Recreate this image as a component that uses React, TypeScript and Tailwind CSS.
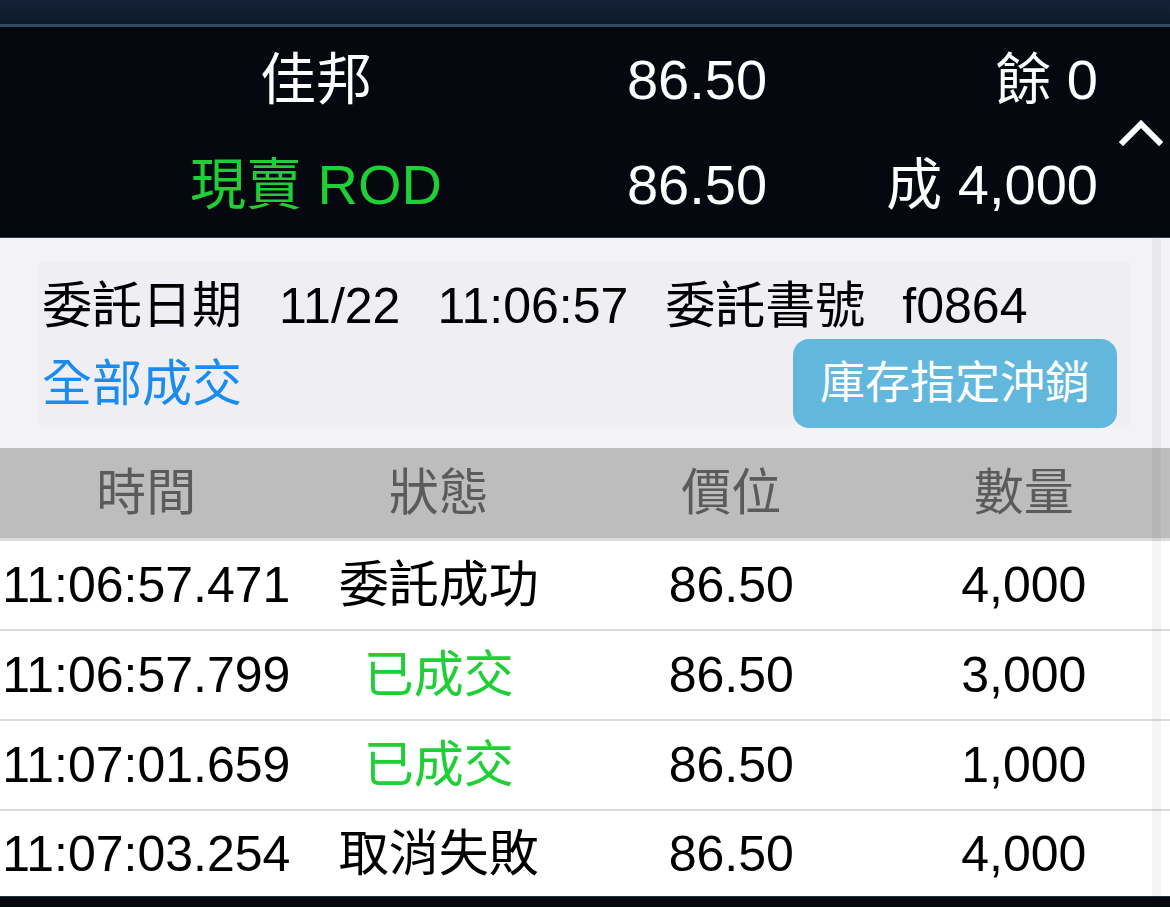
import React from "react";

type Fill = {
  time: string;
  status: string;
  price: string;
  qty: string;
  done?: boolean;
};

const fills: Fill[] = [
  { time: "11:06:57.471", status: "委託成功", price: "86.50", qty: "4,000" },
  { time: "11:06:57.799", status: "已成交", price: "86.50", qty: "3,000", done: true },
  { time: "11:07:01.659", status: "已成交", price: "86.50", qty: "1,000", done: true },
  { time: "11:07:03.254", status: "取消失敗", price: "86.50", qty: "4,000" },
];

function ChevronUp() {
  return (
    <svg width="44" height="30" viewBox="0 0 44 30" className="absolute left-[1119px] top-[90px]">
      <polyline points="4,25 22,7 40,25" fill="none" stroke="#ffffff" strokeWidth="6" strokeLinecap="square" />
    </svg>
  );
}

function SummaryRow({ name, price, right, green }: { name: string; price: string; right: string; green?: boolean }) {
  return (
    <div className="flex h-[105px] items-center text-[56px] leading-none">
      <div className={`w-[632px] flex justify-center whitespace-nowrap ${green ? "text-[#1ecf36]" : "text-white"}`}>{name}</div>
      <div className="w-[130px] flex justify-center whitespace-nowrap text-white">{price}</div>
      <div className="flex-1 flex justify-end pr-[72px] whitespace-nowrap text-white">{right}</div>
    </div>
  );
}

export default function App() {
  return (
    <div className="relative w-[1170px] h-[907px] overflow-hidden bg-white font-['Liberation_Sans','Noto_Sans_CJK_TC',sans-serif]">
      {/* nav strip */}
      <div className="h-[24px] bg-gradient-to-b from-[#142238] to-[#0e1a2c]" />
      <div className="h-[3px] bg-[#2f4b60]" />

      {/* order summary */}
      <div className="relative h-[210px] bg-[#05080e]">
        <SummaryRow name="佳邦" price="86.50" right="餘 0" />
        <SummaryRow name="現賣 ROD" price="86.50" right="成 4,000" green />
        <ChevronUp />
      </div>
      <div className="h-px bg-[#2c3e4c]" />

      {/* order info */}
      <div className="h-[210px] bg-[#f2f2f7] pt-[24px] pl-[39px]">
        <div className="w-[1092px] h-[163px] bg-[#eeeef3] flex flex-col">
          <div className="h-[77px] shrink-0 flex items-center gap-[37px] pl-[3px] pt-[10px] text-[50px] leading-none text-black whitespace-nowrap">
            <span>委託日期</span>
            <span>11/22</span>
            <span>11:06:57</span>
            <span>委託書號</span>
            <span>f0864</span>
          </div>
          <div className="h-[89px] shrink-0 flex items-center justify-between pl-[3px] pr-[14px]">
            <span className="text-[50px] leading-none text-[#1a8cf0]">全部成交</span>
            <button className="w-[324px] h-[89px] rounded-[16px] bg-[#62b7dd] text-white text-[45px] leading-none">
              庫存指定沖銷
            </button>
          </div>
        </div>
      </div>

      {/* table header */}
      <div className="grid grid-cols-4 h-[90px] items-center bg-[#bdbdbd] text-[50px] leading-none text-[#5b5b5b] text-center">
        <span>時間</span>
        <span>狀態</span>
        <span>價位</span>
        <span>數量</span>
      </div>
      <div className="h-[3px] bg-[#dcdcdc]" />

      {/* fills */}
      {fills.map((f, i) => (
        <div
          key={f.time}
          className={`grid grid-cols-4 items-center text-center text-[50px] leading-none text-black whitespace-nowrap ${
            i < fills.length - 1 ? "h-[90px] border-b-2 border-[#dcdcdc]" : "h-[85px]"
          }`}
        >
          <span>{f.time}</span>
          <span className={f.done ? "text-[#1ecf36]" : ""}>{f.status}</span>
          <span>{f.price}</span>
          <span>{f.qty}</span>
        </div>
      ))}

      {/* bottom bar */}
      <div className="h-px bg-[#1e3448]" />
      <div className="h-[20px] bg-[#05080e]" />

      {/* scroll track */}
      <div className="absolute left-[1152px] top-[238px] w-[9px] h-[659px] bg-black/[0.04] pointer-events-none" />
    </div>
  );
}
